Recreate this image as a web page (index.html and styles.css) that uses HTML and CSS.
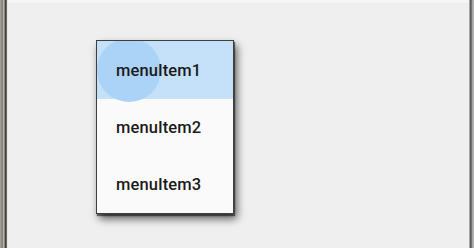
FILE: index.html
```html
<!DOCTYPE html>
<html>
<head>
<meta charset="utf-8">
<link rel="stylesheet" href="styles.css">
</head>
<body>
<div class="window">
  <div class="edge-left"></div>
  <div class="content">
    <div class="top-strip"></div>
    <div class="menu">
      <div class="item active"><span class="ripple"></span><span class="label">menuItem1</span></div>
      <div class="item"><span class="label">menuItem2</span></div>
      <div class="item"><span class="label">menuItem3</span></div>
    </div>
  </div>
  <div class="edge-right"></div>
</div>
</body>
</html>
```
FILE: styles.css
```css
html, body {
  margin: 0;
  padding: 0;
  width: 474px;
  height: 248px;
  overflow: hidden;
  background: #eeeeee;
  font-family: Roboto, "Noto Sans", sans-serif;
}
.window {
  display: flex;
  width: 474px;
  height: 248px;
}
.edge-left {
  width: 7px;
  flex: none;
  background: linear-gradient(to right, #8a8580 0, #b9b4ae 1px, #6d6862 2px, #a39e98 3px, #cfcac4 4px, #4a4642 5px, #3a3734 6px, #9a9894 7px);
}
.content {
  flex: 1;
  position: relative;
  background: #efefef;
  border-left: 1px solid #e6e6e6;
}
.top-strip {
  height: 3px;
  background: #f6f6f6;
  border-bottom: 1px solid #ececec;
}
.edge-right {
  width: 5px;
  flex: none;
  background: linear-gradient(to right, #e4e4e4 0, #6a6a6a 1px, #4c4c4c 2px, #9a9a9a 3px, #b4b4b4 4px);
}
.menu {
  position: absolute;
  left: 88px;
  top: 40px;
  width: 136px;
  background: #fafafa;
  border: 1px solid #3e3e3e;
  box-shadow: 1px 2px 1px rgba(0, 0, 0, 0.5), 3px 5px 8px rgba(0, 0, 0, 0.6);
  overflow: hidden;
}
.item {
  position: relative;
  height: 57px;
  display: flex;
  align-items: center;
  padding-left: 19px;
  font-size: 16.5px;
  font-weight: 500;
  color: #1a1a1a;
  letter-spacing: 0.1px;
}
.item.active {
  height: 58px;
  background: #c5e1f9;
}
.ripple {
  position: absolute;
  left: 0;
  top: -3px;
  width: 64px;
  height: 64px;
  border-radius: 50%;
  background: #aad3f7;
}
.label {
  position: relative;
}
```
